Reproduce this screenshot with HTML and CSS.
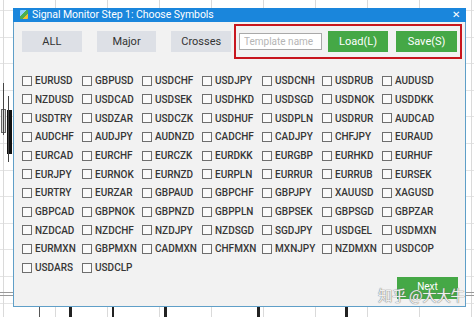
FILE: index.html
```html
<!DOCTYPE html>
<html lang="en">
<head>
  <meta charset="UTF-8">
  <title>Signal Monitor Step 1</title>
  <link rel="stylesheet" href="styles.css">
</head>
<body>
  <div class="desk">
    <!-- chart behind the dialog -->
    <div class="candle c1"></div>
    <div class="candle c2"></div>
    <div class="price-line left"></div>
    <div class="price-line right"></div>
    <div class="bar b1"></div>
    <div class="bar b2"></div>
    <div class="bar b3"></div>
    <div class="bar b4"></div>
    <div class="bar b5"></div>
    <div class="bar b6"></div>

    <div class="dialog">
      <div class="titlebar">
        <span class="app-icon"></span>
        <span class="title">Signal Monitor Step 1: Choose Symbols</span>
        <span class="close">✕</span>
      </div>

      <div class="toolbar">
        <button class="btn grey">ALL</button>
        <button class="btn grey">Major</button>
        <button class="btn grey">Crosses</button>
        <div class="template-box">
          <input class="template-input" type="text" placeholder="Template name">
          <button class="btn green">Load(L)</button>
          <button class="btn green save">Save(S)</button>
        </div>
      </div>

      <div class="symbols">
        <label class="sym"><span class="box"></span>EURUSD</label>
        <label class="sym"><span class="box"></span>GBPUSD</label>
        <label class="sym"><span class="box"></span>USDCHF</label>
        <label class="sym"><span class="box"></span>USDJPY</label>
        <label class="sym"><span class="box"></span>USDCNH</label>
        <label class="sym"><span class="box"></span>USDRUB</label>
        <label class="sym"><span class="box"></span>AUDUSD</label>

        <label class="sym"><span class="box"></span>NZDUSD</label>
        <label class="sym"><span class="box"></span>USDCAD</label>
        <label class="sym"><span class="box"></span>USDSEK</label>
        <label class="sym"><span class="box"></span>USDHKD</label>
        <label class="sym"><span class="box"></span>USDSGD</label>
        <label class="sym"><span class="box"></span>USDNOK</label>
        <label class="sym"><span class="box"></span>USDDKK</label>

        <label class="sym"><span class="box"></span>USDTRY</label>
        <label class="sym"><span class="box"></span>USDZAR</label>
        <label class="sym"><span class="box"></span>USDCZK</label>
        <label class="sym"><span class="box"></span>USDHUF</label>
        <label class="sym"><span class="box"></span>USDPLN</label>
        <label class="sym"><span class="box"></span>USDRUR</label>
        <label class="sym"><span class="box"></span>AUDCAD</label>

        <label class="sym"><span class="box"></span>AUDCHF</label>
        <label class="sym"><span class="box"></span>AUDJPY</label>
        <label class="sym"><span class="box"></span>AUDNZD</label>
        <label class="sym"><span class="box"></span>CADCHF</label>
        <label class="sym"><span class="box"></span>CADJPY</label>
        <label class="sym"><span class="box"></span>CHFJPY</label>
        <label class="sym"><span class="box"></span>EURAUD</label>

        <label class="sym"><span class="box"></span>EURCAD</label>
        <label class="sym"><span class="box"></span>EURCHF</label>
        <label class="sym"><span class="box"></span>EURCZK</label>
        <label class="sym"><span class="box"></span>EURDKK</label>
        <label class="sym"><span class="box"></span>EURGBP</label>
        <label class="sym"><span class="box"></span>EURHKD</label>
        <label class="sym"><span class="box"></span>EURHUF</label>

        <label class="sym"><span class="box"></span>EURJPY</label>
        <label class="sym"><span class="box"></span>EURNOK</label>
        <label class="sym"><span class="box"></span>EURNZD</label>
        <label class="sym"><span class="box"></span>EURPLN</label>
        <label class="sym"><span class="box"></span>EURRUR</label>
        <label class="sym"><span class="box"></span>EURRUB</label>
        <label class="sym"><span class="box"></span>EURSEK</label>

        <label class="sym"><span class="box"></span>EURTRY</label>
        <label class="sym"><span class="box"></span>EURZAR</label>
        <label class="sym"><span class="box"></span>GBPAUD</label>
        <label class="sym"><span class="box"></span>GBPCHF</label>
        <label class="sym"><span class="box"></span>GBPJPY</label>
        <label class="sym"><span class="box"></span>XAUUSD</label>
        <label class="sym"><span class="box"></span>XAGUSD</label>

        <label class="sym"><span class="box"></span>GBPCAD</label>
        <label class="sym"><span class="box"></span>GBPNOK</label>
        <label class="sym"><span class="box"></span>GBPNZD</label>
        <label class="sym"><span class="box"></span>GBPPLN</label>
        <label class="sym"><span class="box"></span>GBPSEK</label>
        <label class="sym"><span class="box"></span>GBPSGD</label>
        <label class="sym"><span class="box"></span>GBPZAR</label>

        <label class="sym"><span class="box"></span>NZDCAD</label>
        <label class="sym"><span class="box"></span>NZDCHF</label>
        <label class="sym"><span class="box"></span>NZDJPY</label>
        <label class="sym"><span class="box"></span>NZDSGD</label>
        <label class="sym"><span class="box"></span>SGDJPY</label>
        <label class="sym"><span class="box"></span>USDGEL</label>
        <label class="sym"><span class="box"></span>USDMXN</label>

        <label class="sym"><span class="box"></span>EURMXN</label>
        <label class="sym"><span class="box"></span>GBPMXN</label>
        <label class="sym"><span class="box"></span>CADMXN</label>
        <label class="sym"><span class="box"></span>CHFMXN</label>
        <label class="sym"><span class="box"></span>MXNJPY</label>
        <label class="sym"><span class="box"></span>NZDMXN</label>
        <label class="sym"><span class="box"></span>USDCOP</label>

        <label class="sym"><span class="box"></span>USDARS</label>
        <label class="sym"><span class="box"></span>USDCLP</label>
      </div>

      <div class="footer">
        <button class="btn green next">Next</button>
      </div>
    </div>

    <div class="watermark">知乎 @大大牛</div>
  </div>
</body>
</html>
```

FILE: styles.css
```css
* {
  margin: 0;
  padding: 0;
  box-sizing: border-box;
}

body {
  width: 474px;
  height: 317px;
  overflow: hidden;
  background: #fff;
  font-family: Roboto, "Liberation Sans", sans-serif;
}

/* chart background */
.desk {
  position: relative;
  width: 474px;
  height: 317px;
  padding: 8px 0 0 13px;
  background:
    repeating-linear-gradient(90deg, transparent 0 3px, #dadada 3px 4px, transparent 4px 52px),
    repeating-linear-gradient(180deg, transparent 0 10px, #e4e4e4 10px 11px, transparent 11px 26.6px);
}

.candle {
  position: absolute;
  width: 5px;
}

.candle.c1 {
  left: 1px;
  top: 109px;
  height: 24px;
  background: #d8d8d8;
  border: 1px solid #666;
}

.candle.c1::before,
.candle.c2::before {
  content: "";
  position: absolute;
  left: 1px;
  width: 1px;
  background: #444;
}

.candle.c1::before {
  top: -27px;
  height: 52px;
}

.candle.c2 {
  left: 7px;
  top: 110px;
  height: 44px;
  background: #111;
}

.candle.c2::before {
  top: -14px;
  height: 66px;
}

.price-line {
  position: absolute;
  top: 292px;
  height: 4px;
  border-top: 1px solid #999;
  border-bottom: 1px solid #999;
}

.price-line.left {
  left: 0;
  width: 13px;
}

.price-line.right {
  left: 466px;
  width: 8px;
}

.bar {
  position: absolute;
  top: 307px;
  height: 10px;
  width: 2px;
  background: #222;
}

.bar.b1 { left: 39px; width: 1px; background: #555; }
.bar.b2 { left: 69px; width: 3px; }
.bar.b3 { left: 112px; }
.bar.b4 { left: 164px; width: 3px; }
.bar.b5 { left: 257px; width: 3px; }
.bar.b6 { left: 345px; width: 3px; }

/* dialog */
.dialog {
  position: relative;
  width: 453px;
  height: 299px;
  background: #f2f2f2;
  border: 1px solid #5f9fc8;
  border-top: none;
  display: flex;
  flex-direction: column;
}

.titlebar {
  height: 15px;
  margin: 0 -1px;
  background: #1a86dc;
  color: #fff;
  display: flex;
  align-items: center;
  padding: 0 6px 0 7px;
}

.app-icon {
  width: 8px;
  height: 9px;
  border-radius: 1px;
  background: linear-gradient(135deg, #8fd0ff 0 40%, #4caf50 40% 70%, #f2c12e 70%);
  margin-right: 4px;
}

.title {
  flex: 1;
  font-size: 10.5px;
  letter-spacing: -0.05px;
}

.close {
  font-size: 10px;
  line-height: 1;
}

.toolbar {
  display: flex;
  align-items: center;
  padding: 2px 3px 0 8px;
}

.btn {
  height: 21px;
  width: 60px;
  border: none;
  font-family: Roboto, "Liberation Sans", sans-serif;
  font-size: 11px;
  color: #333;
}

.btn.grey {
  background: #dde0e6;
  margin-right: 15px;
}

.btn.grey:nth-child(3) {
  margin-right: 3px;
}

.btn.green {
  background: #45a846;
  color: #fff;
}

.template-box {
  flex: 1;
  height: 35px;
  border: 2px solid #c8161e;
  display: flex;
  align-items: center;
  padding: 0 3px 0 3px;
}

.template-input {
  width: 83px;
  height: 17px;
  border: 1px solid #a9a9a9;
  background: #fff;
  padding: 0 4px;
  font-family: Roboto, "Liberation Sans", sans-serif;
  font-size: 10px;
  margin-right: 6px;
}

.template-input::placeholder {
  color: #b5b5b5;
}

.template-box .save {
  margin-left: 8px;
  width: 61px;
}

/* symbol grid */
.symbols {
  display: grid;
  grid-template-columns: repeat(7, 60px);
  grid-auto-rows: 18.7px;
  padding: 0 0 0 8px;
  margin-top: 12.6px;
}

.sym {
  display: flex;
  align-items: center;
  font-size: 10px;
  font-weight: 500;
  color: #363636;
}

.box {
  width: 10px;
  height: 10px;
  border: 1px solid #6e6e6e;
  background: #fafafa;
  margin-right: 3px;
  flex: none;
}

.footer {
  flex: 1;
  display: flex;
  justify-content: flex-end;
  align-items: flex-end;
  padding: 0 7px 7px 0;
}

.btn.next {
  width: 61px;
  height: 22px;
  font-size: 10px;
  padding-bottom: 4px;
}

.watermark {
  position: absolute;
  left: 378px;
  top: 286px;
  font-family: "Noto Sans CJK SC", sans-serif;
  font-size: 14.5px;
  line-height: 1.2;
  color: rgba(255, 255, 255, 0.9);
  text-shadow: 0 0 1px #7a7a7a, 0 0 1px #7a7a7a;
  letter-spacing: -0.4px;
}
```
